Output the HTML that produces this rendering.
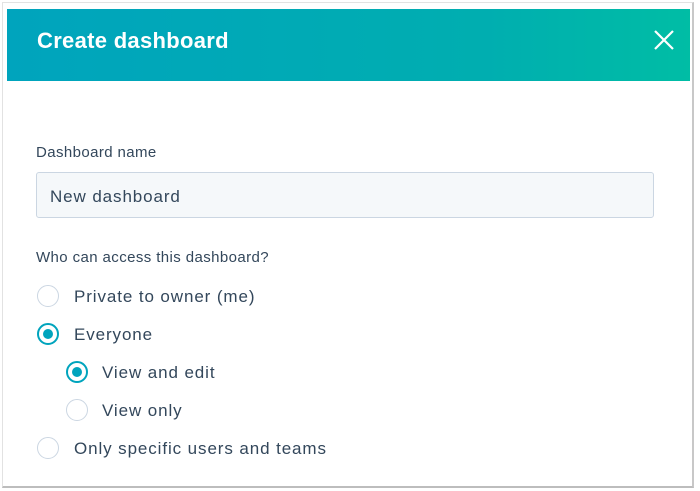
<!DOCTYPE html>
<html><head><style>
body{margin:0;width:700px;height:491px;background:#fff;position:relative;overflow:hidden;font-family:"Liberation Sans",sans-serif;color:#33475b}
.frame{position:absolute;left:2px;top:2px;width:692px;height:486px;border:1px solid #e2e2e2;border-right:2px solid #c8c8c8;border-bottom:2px solid #bdbdbd;box-sizing:border-box}
.hdr{position:absolute;left:7px;top:9px;width:683px;height:72px;background:linear-gradient(90deg,#00a4bd,#00aeb0 70%,#00bda5)}
.hdr h1{position:absolute;left:30px;top:19px;margin:0;font-size:22px;font-weight:bold;color:#fff;letter-spacing:0.3px}
.t{position:absolute;white-space:nowrap}
.input{position:absolute;left:36px;top:172px;width:618px;height:46px;box-sizing:border-box;background:#f5f8fa;border:1px solid #cbd6e2;border-radius:3px}
.r{position:absolute;width:22px;height:22px;box-sizing:border-box;border:1px solid #cbd6e2;border-radius:50%;background:#fff}
.r.on{border:2px solid #00a4bd}
.r.on::after{content:"";position:absolute;left:4px;top:4px;width:10px;height:10px;border-radius:50%;background:#00a4bd}
.o{font-size:17px;letter-spacing:0.9px}
.s{font-size:15px;letter-spacing:0.4px}
</style></head><body>
<div class="frame"></div>
<div class="hdr"><h1>Create dashboard</h1>
<svg style="position:absolute;left:647px;top:21px" width="20" height="20" viewBox="0 0 20 20"><path d="M1 1L19 19M19 1L1 19" stroke="#fff" stroke-width="2.2"/></svg></div>
<div class="t s" style="left:36px;top:144px">Dashboard name</div>
<div class="input"></div>
<div class="t o" style="left:50px;top:187px">New dashboard</div>
<div class="t s" style="left:36px;top:249px">Who can access this dashboard?</div>
<div class="r" style="left:37px;top:285px"></div><div class="t o" style="left:74px;top:287px">Private to owner (me)</div>
<div class="r on" style="left:37px;top:323px"></div><div class="t o" style="left:74px;top:325px">Everyone</div>
<div class="r on" style="left:66px;top:361px"></div><div class="t o" style="left:102px;top:363px">View and edit</div>
<div class="r" style="left:66px;top:399px"></div><div class="t o" style="left:102px;top:401px">View only</div>
<div class="r" style="left:37px;top:437px"></div><div class="t o" style="left:74px;top:439px">Only specific users and teams</div>
</body></html>
